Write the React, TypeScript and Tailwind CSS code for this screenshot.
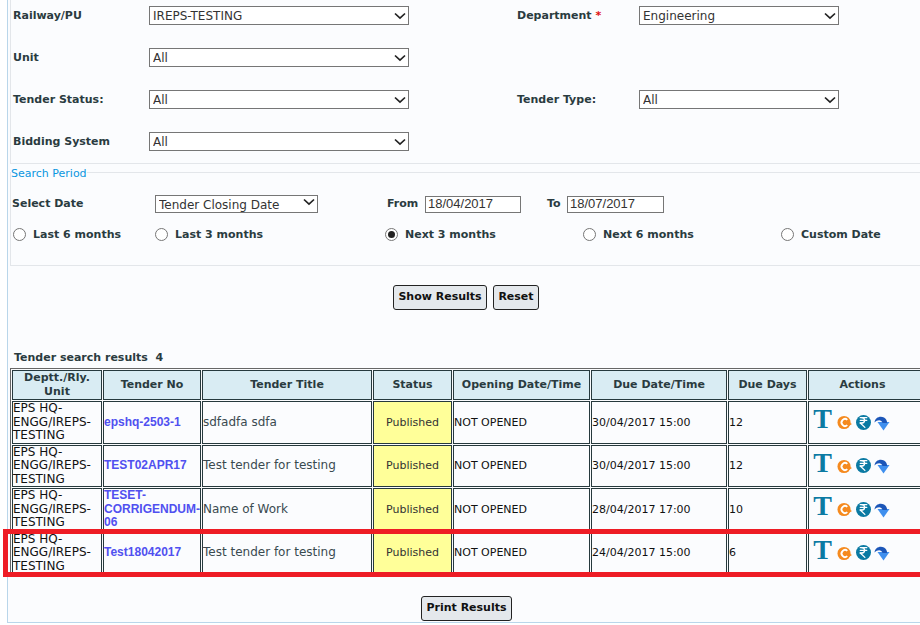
import React from "react";
import { IndianRupee } from "lucide-react";

const rows = [
  { no: "epshq-2503-1", title: "sdfadfa sdfa", due: "30/04/2017 15:00", days: "12" },
  { no: "TEST02APR17", title: "Test tender for testing", due: "30/04/2017 15:00", days: "12" },
  { no: "TESET-\nCORRIGENDUM-\n06", title: "Name of Work", due: "28/04/2017 17:00", days: "10" },
  { no: "Test18042017", title: "Test tender for testing", due: "24/04/2017 15:00", days: "6" },
];

const headers = [
  ["Deptt./Rly. Unit", ""],
  ["Tender No", ""],
  ["Tender Title", ""],
  ["Status", ""],
  ["Opening Date/Time", ""],
  ["Due Date/Time", ""],
  ["Due Days", ""],
  ["Actions", "pr-[21px]"],
];

function Dropdown({ value, className, chevron = "top-[6px]" }: { value: string; className: string; chevron?: string }) {
  return (
    <div className={`relative ${className}`}>
      <select
        defaultValue={value}
        className="block w-full h-full appearance-none border border-[#767676] bg-white pl-[3px] text-[12px] text-[#333] outline-none rounded-none"
      >
        <option>{value}</option>
      </select>
      <svg viewBox="0 0 12 8" className={`absolute right-[3px] w-[12px] h-[8px] pointer-events-none ${chevron}`}>
        <path d="M1 1.5 L6 6.2 L11 1.5" fill="none" stroke="#222" strokeWidth="1.7" />
      </svg>
    </div>
  );
}

function Radio({ checked, label, className }: { checked?: boolean; label: string; className: string }) {
  return (
    <label className={`flex items-center gap-[7px] ${className}`}>
      <span className="flex items-center justify-center w-[13px] h-[13px] -mt-[2px] rounded-full border border-[#767676] bg-white">
        {checked && <span className="w-[7px] h-[7px] rounded-full bg-[#222]" />}
      </span>
      <span className="text-[11px] font-bold text-[#2a3b40]">{label}</span>
    </label>
  );
}

function ActionIcons() {
  return (
    <div className="flex items-center pl-[4px] -mt-[2px]">
      <span className="w-[19px] -mt-[4px] text-center text-[28px] leading-[22px] font-bold text-[#0b7aa3] font-['Liberation_Serif',serif]">
        T
      </span>
      <svg viewBox="0 0 16 16" className="w-[15px] h-[15px] ml-[5px] mt-[3px]">
        <circle cx="7.5" cy="8" r="7" fill="#f58a1f" />
        <path d="M16 9.5 L12 12 L13 8 Z" fill="#f58a1f" />
        <path d="M11 5.2 A3.7 3.7 0 1 0 11 10.8" fill="none" stroke="#fff" strokeWidth="2" />
      </svg>
      <span className="flex items-center justify-center w-[15px] h-[15px] ml-[4px] mt-[2px] rounded-full bg-[#0b7aa3]">
        <IndianRupee size={13} color="#fff" strokeWidth={2.5} />
      </span>
      <svg viewBox="0 0 16 16" className="w-[16px] h-[16px] ml-[3px] mt-[3px]">
        <path d="M3.5 7 L15.5 7 L9.5 15.5 Z" fill="#3f8fee" />
        <path
          d="M0.5 7.5 C1 2.5 6 0.5 10 2.5 C12 3.5 13 5.5 13.2 8 L8.5 8 C7.5 4.5 3.5 4.5 0.5 7.5 Z"
          fill="#1c56b8"
        />
      </svg>
    </div>
  );
}

function Btn({ children, className }: { children: React.ReactNode; className: string }) {
  return (
    <button className={`h-[25px] px-0 rounded-[3px] border border-[#222] bg-[#e4e8ec] text-[11px] font-bold text-[#111] ${className}`}>
      {children}
    </button>
  );
}

export default function App() {
  const label = "text-[11px] font-bold text-[#2a3b40]";
  const td = "border border-[#26393d] p-0 align-middle";
  const dateInput =
    "h-[17px] border border-[#767676] bg-white pl-[2px] text-[13px] text-[#333] outline-none font-['Liberation_Sans',sans-serif]";
  return (
    <div className="relative w-[920px] h-[625px] overflow-hidden bg-white font-['DejaVu_Sans',sans-serif]">
      <div className="ml-[7px] w-[940px] h-[623px] border-l border-b border-[#b9d6ea] bg-[#fbfcfe]">
        <div className="ml-[2px] pl-[2px] pt-[6px] h-[164px] border-l border-b border-[#e3e6ea]">
          <div className="grid grid-cols-[136px_368px_122px_1fr] auto-rows-[42px] items-start">
            <div className={`${label} mt-[2px]`}>Railway/PU</div>
            <Dropdown value="IREPS-TESTING" className="w-[260px] h-[19px]" />
            <div className={`${label} mt-[2px]`}>
              Department <span className="text-[#e01010]">*</span>
            </div>
            <Dropdown value="Engineering" className="w-[200px] h-[19px]" />

            <div className={`${label} mt-[2px]`}>Unit</div>
            <Dropdown value="All" className="w-[260px] h-[19px]" />
            <div />
            <div />

            <div className={`${label} mt-[2px]`}>Tender Status:</div>
            <Dropdown value="All" className="w-[260px] h-[19px]" />
            <div className={`${label} mt-[2px]`}>Tender Type:</div>
            <Dropdown value="All" className="w-[200px] h-[19px]" />

            <div className={`${label} mt-[2px]`}>Bidding System</div>
            <Dropdown value="All" className="w-[260px] h-[19px]" />
          </div>
        </div>

        <fieldset className="ml-[2px] -mt-[1px] h-[103px] border border-[#e3e6ea] pl-[1px]">
          <legend className="p-0 pt-[4px] -ml-[1px] text-[11px] leading-[14px] text-[#0a96e0]">Search Period</legend>
          <div className="flex items-center mt-[14px] h-[18px]">
            <div className={`${label} w-[143px]`}>Select Date</div>
            <Dropdown value="Tender Closing Date" className="w-[163px] h-[18px]" chevron="top-[3px]" />
            <div className={`${label} ml-[69px] w-[38px]`}>From</div>
            <input defaultValue="18/04/2017" className={`${dateInput} w-[96px]`} />
            <div className={`${label} ml-[26px] w-[20px]`}>To</div>
            <input defaultValue="18/07/2017" className={`${dateInput} w-[97px]`} />
          </div>
          <div className="flex items-center ml-[1px] mt-[14px] h-[16px]">
            <Radio label="Last 6 months" className="w-[142px]" />
            <Radio label="Last 3 months" className="w-[230px]" />
            <Radio checked label="Next 3 months" className="w-[198px]" />
            <Radio label="Next 6 months" className="w-[198px]" />
            <Radio label="Custom Date" className="w-[140px]" />
          </div>
        </fieldset>

        <div className="flex justify-start gap-[6px] ml-[385px] mt-[19px]">
          <Btn className="w-[94px]">Show Results</Btn>
          <Btn className="w-[46px]">Reset</Btn>
        </div>

        <div className={`${label} ml-[6px] mt-[41px] leading-[14px]`}>Tender search results&nbsp; 4</div>

        <table className="ml-[2px] mt-[3px] table-fixed w-[930px] border border-[#666] border-separate border-spacing-[1px] text-[12px] leading-[13.5px] text-[#111]">
          <colgroup>
            <col className="w-[90px]" />
            <col className="w-[98px]" />
            <col className="w-[170px]" />
            <col className="w-[79px]" />
            <col className="w-[137px]" />
            <col className="w-[136px]" />
            <col className="w-[79px]" />
            <col className="w-[130px]" />
          </colgroup>
          <thead>
            <tr className="h-[28px]">
              {headers.map(([h, extra]) => (
                <th
                  key={h}
                  className={`border border-[#26393d] bg-[#d9ecf3] p-0 text-center text-[11px] font-bold leading-[14px] text-[#2a3b40] ${extra}`}
                >
                  {h}
                </th>
              ))}
            </tr>
          </thead>
          <tbody>
            {rows.map((r) => (
              <tr key={r.no} className="h-[42.5px]">
                <td className={td}>EPS HQ-ENGG/IREPS-TESTING</td>
                <td className={`${td} whitespace-pre-line font-bold text-[#5050f0] font-['Liberation_Sans',sans-serif]`}>{r.no}</td>
                <td className={`${td} text-[#3a4a50]`}>{r.title}</td>
                <td className={`${td} bg-[#ffff99] text-center text-[11px] text-[#333]`}>Published</td>
                <td className={`${td} text-[11px]`}>NOT OPENED</td>
                <td className={`${td} text-[11px]`}>{r.due}</td>
                <td className={`${td} text-[11px]`}>{r.days}</td>
                <td className={td}>
                  <ActionIcons />
                </td>
              </tr>
            ))}
          </tbody>
        </table>

        <div className="ml-[413px] mt-[18px]">
          <Btn className="w-[91px]">Print Results</Btn>
        </div>
      </div>

      {/* red highlight drawn over the last row */}
      <div className="absolute left-[3px] top-[529px] w-[930px] h-[48px] border-[5px] border-[#ee1c25]" />
    </div>
  );
}
